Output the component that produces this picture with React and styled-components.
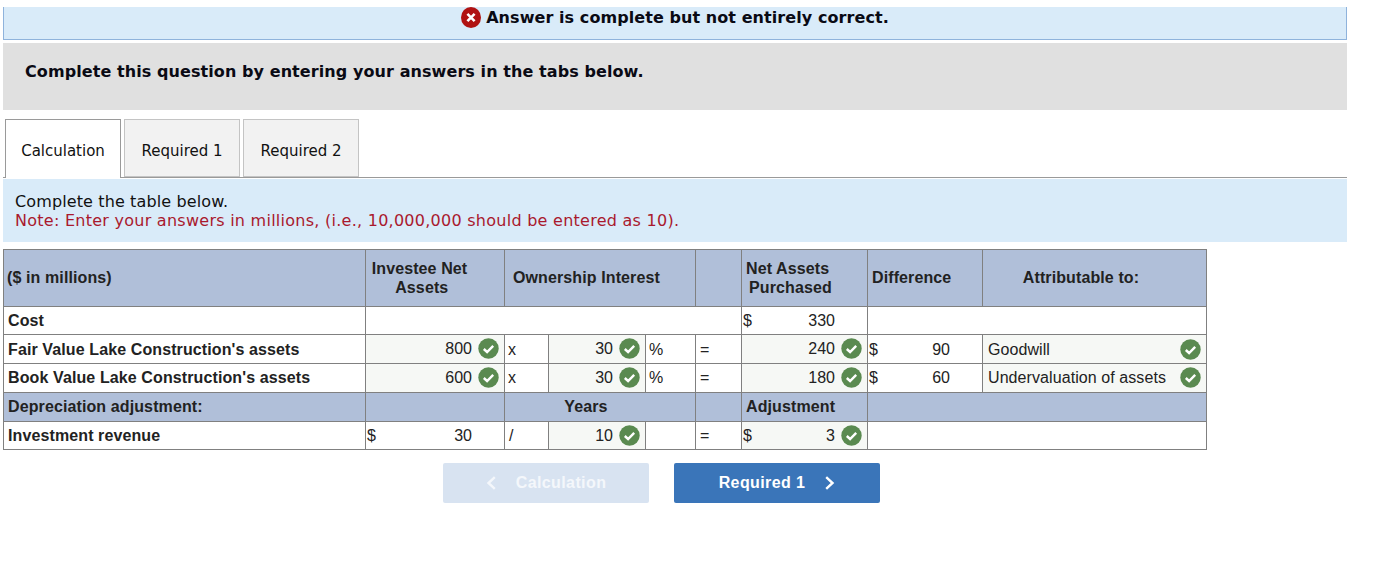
import React from "react";
import styled, { createGlobalStyle } from "styled-components";

const Global = createGlobalStyle`
  html, body { margin: 0; padding: 0; background: #fff; }
  body { font-family: "DejaVu Sans", Verdana, sans-serif; color: #111; }
`;

const Page = styled.div`
  width: 1344px;
  padding: 7px 0 0 3px;
  display: flex;
  flex-direction: column;
`;

const Banner = styled.div`
  height: 32px;
  background: #d9ebf9;
  border-left: 1px solid #8fb3dc;
  border-right: 1px solid #8fb3dc;
  border-bottom: 1px solid #8fb3dc;
  display: flex;
  justify-content: center;
  align-items: flex-start;
  gap: 5px;
  box-sizing: content-box;
  font-size: 16px;
  font-weight: 700;
  line-height: 20px;
  letter-spacing: 0.07px;
  color: #0a0a14;
`;

const BannerText = styled.span`
  padding-top: 1px;
`;

const BannerIcon = styled.svg`
  width: 20px;
  height: 21px;
  flex: none;
`;

const Prompt = styled.div`
  margin-top: 3px;
  height: 67px;
  background: #e0e0e0;
  padding: 19px 22px 0;
  box-sizing: border-box;
  font-size: 16px;
  font-weight: 700;
  line-height: 20px;
  letter-spacing: 0.08px;
  color: #0a0a14;
`;

const Tabs = styled.div`
  margin-top: 9px;
  height: 58px;
  display: flex;
  gap: 3px;
  align-items: flex-start;
  padding-left: 2px;
  border-bottom: 1px solid #9a9a9a;
`;

const Tab = styled.div`
  height: ${(p) => (p.$active ? "59px" : "58px")};
  box-sizing: border-box;
  width: 116px;
  border: 1px solid ${(p) => (p.$active ? "#9a9a9a" : "#c4c4c4")};
  border-bottom: ${(p) => (p.$active ? "none" : "1px solid #c4c4c4")};
  background: ${(p) => (p.$active ? "#fff" : "#f2f2f2")};
  position: relative;
  display: flex;
  align-items: center;
  justify-content: center;
  font-size: 15px;
  padding-top: ${(p) => (p.$active ? "4px" : "5px")};
  color: #111;
`;

const Note = styled.div`
  margin-top: 1px;
  height: 63px;
  box-sizing: border-box;
  background: #d9ebf9;
  padding: 13px 12px 0;
  font-size: 16px;
  line-height: 19px;
  letter-spacing: 0.12px;
  color: #111;
`;

const NoteRed = styled.div`
  color: #a9192e;
  letter-spacing: 0.26px;
`;

const Table = styled.table`
  margin-top: 7px;
  width: 1204px;
  table-layout: fixed;
  border-collapse: collapse;
  font-family: "Liberation Sans", Arial, sans-serif;
  font-size: 16px;
  color: #222;
`;

const HeadRow = styled.tr`
  height: 57px;
`;

const Row = styled.tr`
  height: ${(p) => p.$h || 29}px;
`;

const Cell = styled.td`
  border: 1px solid #808080;
  padding: ${(p) => p.$top || 0}px ${(p) => p.$right || 0}px 0 ${(p) => (p.$pad === undefined ? 4 : p.$pad)}px;
  line-height: ${(p) => (p.$two ? 19 : 18)}px;
  background: ${(p) => (p.$input ? "#f6f8f5" : p.$head ? "#b0bfd9" : "#fff")};
  font-weight: ${(p) => (p.$bold || p.$head ? 700 : 400)};
  letter-spacing: ${(p) => (p.$bold || p.$head ? "0.11px" : "0.08px")};
  text-align: ${(p) => p.$align || "left"};
  vertical-align: middle;
`;

const Indent = styled.span`
  padding-left: 3px;
`;

const Amount = styled.div`
  display: flex;
  align-items: center;
  justify-content: space-between;
  padding-right: 5px;
`;

const Value = styled.span`
  margin-left: auto;
  text-align: right;
  letter-spacing: 0;
`;

const Slot = styled.span`
  flex: none;
  width: 21px;
  height: 21px;
  margin: 0 0 1px 6px;
  display: block;
`;

const CheckSvg = styled.svg`
  display: block;
  width: 21px;
  height: 21px;
`;

const Buttons = styled.div`
  margin-top: 13px;
  padding-left: 440px;
  display: flex;
  gap: 25px;
`;

const NavButton = styled.button`
  width: 206px;
  height: 40px;
  border: none;
  border-radius: 2px;
  background: ${(p) => (p.$disabled ? "#d8e3f1" : "#3a75b9")};
  color: ${(p) => (p.$disabled ? "#f4f7fb" : "#fff")};
  font-family: "Liberation Sans", Arial, sans-serif;
  font-size: 16px;
  letter-spacing: 0.4px;
  font-weight: 700;
  display: flex;
  align-items: center;
  justify-content: center;
  gap: 20px;
  padding: 0;
`;

const Chevron = styled.svg`
  width: 10px;
  height: 14px;
  flex: none;
`;

const Check = () => (
  <CheckSvg viewBox="0 0 21 21">
    <circle cx="10.5" cy="10.5" r="10.2" fill="#5a8a50" />
    <path d="M5.8 11 L9.1 14 L15.2 7.8" fill="none" stroke="#fff" strokeWidth="2.4" />
  </CheckSvg>
);

const Amt = ({ dollar, value, ok }) => (
  <Amount>
    {dollar && <span>$</span>}
    <Value>{value}</Value>
    <Slot>{ok && <Check />}</Slot>
  </Amount>
);

const Attr = ({ text }) => (
  <Amount>
    <span>{text}</span>
    <Slot><Check /></Slot>
  </Amount>
);

export default function App() {
  return (
    <>
      <Global />
      <Page>
        <Banner>
          <BannerIcon viewBox="0 0 20 21">
            <ellipse cx="10" cy="10.5" rx="10" ry="10.5" fill="#b01212" />
            <path d="M6.4 6.9 L13.6 14.1 M13.6 6.9 L6.4 14.1" stroke="#fff" strokeWidth="2.6" />
          </BannerIcon>
          <BannerText>Answer is complete but not entirely correct.</BannerText>
        </Banner>
        <Prompt>Complete this question by entering your answers in the tabs below.</Prompt>
        <Tabs>
          <Tab $active>Calculation</Tab>
          <Tab>Required 1</Tab>
          <Tab>Required 2</Tab>
        </Tabs>
        <Note>
          Complete the table below.
          <NoteRed>Note: Enter your answers in millions, (i.e., 10,000,000 should be entered as 10).</NoteRed>
        </Note>
        <Table>
          <colgroup>
            <col style={{ width: 362 }} />
            <col style={{ width: 139 }} />
            <col style={{ width: 44 }} />
            <col style={{ width: 97 }} />
            <col style={{ width: 50 }} />
            <col style={{ width: 46 }} />
            <col style={{ width: 126 }} />
            <col style={{ width: 115 }} />
            <col style={{ width: 224 }} />
          </colgroup>
          <tbody>
            <HeadRow>
              <Cell $head $pad={3}>($ in millions)</Cell>
              <Cell $head $two $align="center" $pad={0} $right={31}>Investee Net<br />&nbsp;Assets</Cell>
              <Cell $head colSpan={3} $pad={8}>Ownership Interest</Cell>
              <Cell $head />
              <Cell $head $two $pad={4}>Net Assets<br /><Indent>Purchased</Indent></Cell>
              <Cell $head>Difference</Cell>
              <Cell $head $align="center" $pad={0} $right={27}>Attributable to:</Cell>
            </HeadRow>
            <Row $h={28}>
              <Cell $bold>Cost</Cell>
              <Cell colSpan={5} />
              <Cell $pad={1}><Amt dollar value="330" /></Cell>
              <Cell colSpan={2} />
            </Row>
            <Row>
              <Cell $bold $top={1}>Fair Value Lake Construction's assets</Cell>
              <Cell $input><Amt value="800" ok /></Cell>
              <Cell $pad={3} $top={1}>x</Cell>
              <Cell $input><Amt value="30" ok /></Cell>
              <Cell $pad={3} $top={1}>%</Cell>
              <Cell $top={1}>=</Cell>
              <Cell $input><Amt value="240" ok /></Cell>
              <Cell $pad={1} $top={1}><Amt dollar value="90" /></Cell>
              <Cell $input $pad={5} $top={1}><Attr text="Goodwill" /></Cell>
            </Row>
            <Row>
              <Cell $bold>Book Value Lake Construction's assets</Cell>
              <Cell $input><Amt value="600" ok /></Cell>
              <Cell $pad={3}>x</Cell>
              <Cell $input><Amt value="30" ok /></Cell>
              <Cell $pad={3}>%</Cell>
              <Cell>=</Cell>
              <Cell $input><Amt value="180" ok /></Cell>
              <Cell $pad={1}><Amt dollar value="60" /></Cell>
              <Cell $input $pad={5}><Attr text="Undervaluation of assets" /></Cell>
            </Row>
            <Row>
              <Cell $head>Depreciation adjustment:</Cell>
              <Cell $head />
              <Cell $head colSpan={3} $align="center" $pad={0} $right={28}>Years</Cell>
              <Cell $head />
              <Cell $head>Adjustment</Cell>
              <Cell $head colSpan={2} />
            </Row>
            <Row $h={28}>
              <Cell $bold>Investment revenue</Cell>
              <Cell $pad={1}><Amt dollar value="30" /></Cell>
              <Cell>/</Cell>
              <Cell $input><Amt value="10" ok /></Cell>
              <Cell />
              <Cell>=</Cell>
              <Cell $input $pad={1}><Amt dollar value="3" ok /></Cell>
              <Cell colSpan={2} />
            </Row>
          </tbody>
        </Table>
        <Buttons>
          <NavButton $disabled>
            <Chevron viewBox="0 0 10 14"><path d="M8.8 1.2 L2.5 7 L8.8 12.8" fill="none" stroke="currentColor" strokeWidth="2.4" /></Chevron>
            Calculation
          </NavButton>
          <NavButton>
            Required 1
            <Chevron viewBox="0 0 10 14"><path d="M1.2 1.2 L7.5 7 L1.2 12.8" fill="none" stroke="currentColor" strokeWidth="2.4" /></Chevron>
          </NavButton>
        </Buttons>
      </Page>
    </>
  );
}
